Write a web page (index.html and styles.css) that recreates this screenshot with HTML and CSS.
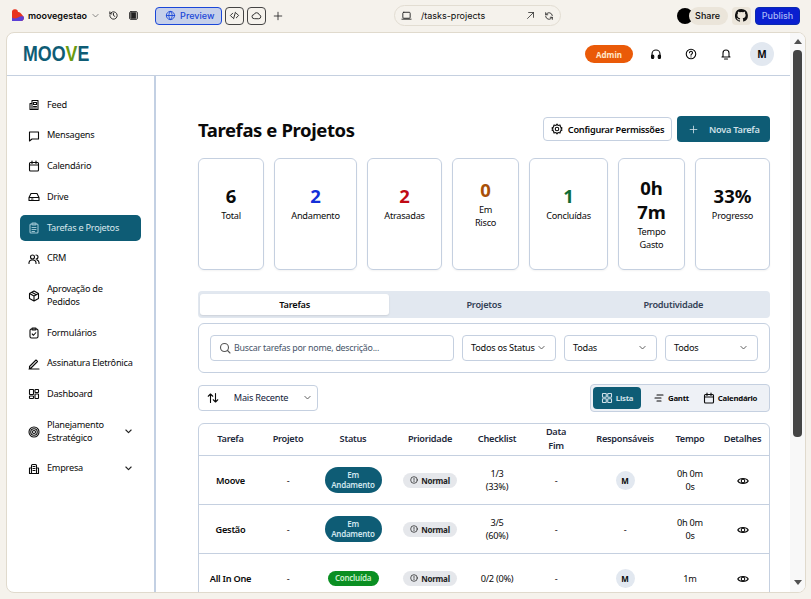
FILE: index.html
```html
<!DOCTYPE html>
<html lang="pt-BR">

<head>
    <meta charset="UTF-8">
    <title>Tarefas e Projetos</title>
    <link rel="stylesheet" href="styles.css">
</head>

<body>
    <!-- builder toolbar -->
    <header class="toolbar">
        <div class="tb-left">
            <svg class="tb-heart" viewBox="0 0 13 13" width="13" height="13"><path d="M1 12V3.500a3 3 0 0 1 6-.5 3 3 0 0 1 3 1.500l2.500 3a3 3 0 0 1-2.500 4.500z" fill="#e8321f"/><path d="M1 12V8.500c2 1.500 4 1 6 0s3.500-1.500 5.500-1a3 3 0 0 1-2.500 4.500z" fill="#5b3fd6"/></svg>
            <span class="tb-name">moovegestao</span>
            <svg class="tb-ic chev-sm" viewBox="0 0 24 24" width="9" height="9"><path d="M5 9l7 7 7-7"/></svg>
            <svg class="tb-ic tb-hist" viewBox="0 0 24 24" width="11" height="11"><path d="M4 12a8 8 0 1 0 2.500-5.800L4 8.500M4 4v4.500h4.500M12 7.500V12l3 2"/></svg>
            <svg class="tb-ic tb-panel" viewBox="0 0 24 24" width="11" height="11"><rect x="3.500" y="3.500" width="17" height="17" rx="3"/><rect x="7" y="6" width="10" height="12" fill="#222"/></svg>
            <button class="tb-preview">
                <svg class="tb-ic blue" viewBox="0 0 24 24" width="11" height="11"><circle cx="12" cy="12" r="9"/><path d="M3 12h18M12 3c-5 5-5 13 0 18M12 3c5 5 5 13 0 18"/></svg>
                Preview
            </button>
            <button class="tb-square"><svg class="tb-ic" viewBox="0 0 24 24" width="11" height="11"><path d="M8 7l-5 5 5 5M16 7l5 5-5 5M14 5l-4 14"/></svg></button>
            <button class="tb-square"><svg class="tb-ic" viewBox="0 0 24 24" width="11" height="11"><path d="M7 19a4.500 4.500 0 0 1-.5-9A6 6 0 0 1 18 10.500 4.300 4.300 0 0 1 17.500 19z"/></svg></button>
            <svg class="tb-ic tb-plus" viewBox="0 0 24 24" width="10" height="10"><path d="M12 3v18M3 12h18"/></svg>
        </div>
        <div class="tb-url">
            <svg class="tb-ic" viewBox="0 0 24 24" width="11" height="11"><rect x="4" y="5" width="16" height="13" rx="2"/><path d="M2 20h20"/></svg>
            <span class="tb-path">/tasks-projects</span>
            <svg class="tb-ic url-open" viewBox="0 0 24 24" width="9" height="9"><path d="M4 20L20 4M7 4h13v13"/></svg>
            <svg class="tb-ic" viewBox="0 0 24 24" width="10" height="10"><path d="M20 11a8 8 0 0 0-14-4L4 9M4 4v5h5M4 13a8 8 0 0 0 14 4l2-2M20 20v-5h-5"/></svg>
        </div>
        <div class="tb-right">
            <div class="tb-share">
                <span class="share-moon"></span>
                <span class="share-label">Share</span>
            </div>
            <div class="tb-github">
                <svg viewBox="0 0 16 16" width="13" height="13"><path fill="#111" d="M8 0a8 8 0 0 0-2.500 15.600c.4.100.5-.2.500-.4v-1.400c-2.200.5-2.700-1-2.700-1-.4-.9-.9-1.200-.9-1.200-.7-.5.100-.5.100-.5.800.100 1.200.8 1.200.8.700 1.200 1.900.9 2.300.7.100-.5.300-.9.500-1.100-1.800-.2-3.600-.9-3.600-4 0-.9.300-1.600.8-2.100-.1-.2-.4-1 .1-2.100 0 0 .7-.2 2.200.8a7.600 7.600 0 0 1 4 0c1.500-1 2.200-.8 2.200-.8.400 1.100.2 1.900.1 2.100.5.600.8 1.300.8 2.100 0 3.100-1.900 3.700-3.700 3.900.3.300.6.800.6 1.500v2.200c0 .2.100.5.600.4A8 8 0 0 0 8 0z"/></svg>
            </div>
            <button class="tb-publish">Publish</button>
        </div>
    </header>

    <div class="frame">
        <div class="app">
            <div class="app-head">
                <div class="logo">MO<span class="logo-o2">O</span><span class="logo-v">V</span>E</div>
                <div class="head-actions">
                    <span class="admin-pill">Admin</span>
                    <svg class="ic head-ic" viewBox="0 0 24 24" width="12" height="12"><path d="M4 18v-6a8 8 0 0 1 16 0v6"/><rect x="3" y="14" width="4.500" height="7" rx="2" fill="#111"/><rect x="16.500" y="14" width="4.500" height="7" rx="2" fill="#111"/></svg>
                    <svg class="ic head-ic" viewBox="0 0 24 24" width="12" height="12"><circle cx="12" cy="12" r="9.500"/><path d="M9 9.500a3 3 0 1 1 4.500 2.600c-1 .6-1.500 1.100-1.500 2.400M12 17.500v.5"/></svg>
                    <svg class="ic head-ic" viewBox="0 0 24 24" width="12" height="12"><path d="M6 17V10a6 6 0 0 1 12 0v7l2 1H4zM9 22h6"/></svg>
                    <span class="avatar avatar-lg">M</span>
                </div>
            </div>
            <div class="app-body">
                <nav class="sidebar">
                    <a class="nav-item"><svg class="ic" viewBox="0 0 24 24"><path d="M8 3h12v18H4V9h4zM8 3v18M11 7h6v4h-6zM11 15h6M11 18h6"/></svg><span>Feed</span></a>
                    <a class="nav-item"><svg class="ic" viewBox="0 0 24 24"><path d="M3 4h18v14H8l-5 4z"/></svg><span>Mensagens</span></a>
                    <a class="nav-item"><svg class="ic" viewBox="0 0 24 24"><rect x="3" y="5" width="18" height="17" rx="2"/><path d="M3 10h18M8 2v5M16 2v5"/></svg><span>Calendário</span></a>
                    <a class="nav-item"><svg class="ic" viewBox="0 0 24 24"><path d="M2 13l4-8h12l4 8v6H2zM2 13h20M7 16h3"/></svg><span>Drive</span></a>
                    <a class="nav-item active"><svg class="ic" viewBox="0 0 24 24"><rect x="4" y="4" width="16" height="18" rx="2"/><rect x="8" y="2" width="8" height="4" rx="1"/><path d="M8 11h8M8 15h8M8 19h5"/></svg><span>Tarefas e Projetos</span></a>
                    <a class="nav-item"><svg class="ic" viewBox="0 0 24 24"><circle cx="9" cy="8" r="4"/><path d="M2 21v-2a6 6 0 0 1 6-5h2a6 6 0 0 1 6 5v2M16 4a4 4 0 0 1 0 8M18 14a6 6 0 0 1 4 5v2"/></svg><span>CRM</span></a>
                    <a class="nav-item"><svg class="ic" viewBox="0 0 24 24"><path d="M12 2l9 5v10l-9 5-9-5V7zM3 7l9 5 9-5M12 12v10M7.500 4.500l9 5"/></svg><span>Aprovação de<br>Pedidos</span></a>
                    <a class="nav-item"><svg class="ic" viewBox="0 0 24 24"><rect x="4" y="4" width="16" height="18" rx="3"/><rect x="8" y="2" width="8" height="4" rx="1"/><path d="M8.500 14l2.500 2.500 4.500-5"/></svg><span>Formulários</span></a>
                    <a class="nav-item"><svg class="ic" viewBox="0 0 24 24"><path d="M3 17L16 4l3 3L6 20H3zM2 22h20"/></svg><span>Assinatura Eletrônica</span></a>
                    <a class="nav-item"><svg class="ic" viewBox="0 0 24 24"><rect x="3" y="3" width="8" height="10" rx="1"/><rect x="14" y="3" width="7" height="6" rx="1"/><rect x="14" y="12" width="7" height="9" rx="1"/><rect x="3" y="16" width="8" height="5" rx="1"/></svg><span>Dashboard</span></a>
                    <a class="nav-item"><svg class="ic" viewBox="0 0 24 24"><circle cx="12" cy="12" r="10"/><circle cx="12" cy="12" r="6.500"/><circle cx="12" cy="12" r="3"/></svg><span>Planejamento<br>Estratégico</span><svg class="nav-chev" viewBox="0 0 24 24"><path d="M5 8l7 7 7-7"/></svg></a>
                    <a class="nav-item"><svg class="ic" viewBox="0 0 24 24"><path d="M7 21V5a2 2 0 0 1 2-2h6a2 2 0 0 1 2 2v16M7 10H3v11h18V10h-4M10 7h4M10 11h4M10 15h4"/></svg><span>Empresa</span><svg class="nav-chev" viewBox="0 0 24 24"><path d="M5 8l7 7 7-7"/></svg></a>
                </nav>

                <main class="content">
                    <div class="page-head">
                        <h1>Tarefas e Projetos</h1>
                        <div class="page-actions">
                            <button class="btn-outline"><svg class="ic" viewBox="0 0 24 24"><circle cx="12" cy="12" r="3.500"/><path d="M12 2l2 3 4-1 1 4 3 2-2 2 2 2-3 2-1 4-4-1-2 3-2-3-4 1-1-4-3-2 2-2-2-2 3-2 1-4 4 1z"/></svg>Configurar Permissões</button>
                            <button class="btn-primary"><svg class="ic" viewBox="0 0 24 24"><path d="M12 3v18M3 12h18"/></svg>Nova Tarefa</button>
                        </div>
                    </div>

                    <section class="stats">
                        <div class="stat"><strong>6</strong><span>Total</span></div>
                        <div class="stat"><strong class="c-blue">2</strong><span>Andamento</span></div>
                        <div class="stat"><strong class="c-red">2</strong><span>Atrasadas</span></div>
                        <div class="stat"><strong class="c-amber">0</strong><span>Em<br>Risco</span></div>
                        <div class="stat"><strong class="c-green">1</strong><span>Concluídas</span></div>
                        <div class="stat stat-tall"><strong>0h<br>7m</strong><span>Tempo<br>Gasto</span></div>
                        <div class="stat"><strong>33%</strong><span>Progresso</span></div>
                    </section>

                    <div class="tabs">
                        <div class="tab active">Tarefas</div>
                        <div class="tab">Projetos</div>
                        <div class="tab">Produtividade</div>
                    </div>

                    <section class="filters">
                        <div class="field search"><svg class="ic search-ic" viewBox="0 0 24 24"><circle cx="11" cy="11" r="8"/><path d="M17 17l5 5"/></svg><span>Buscar tarefas por nome, descrição...</span></div>
                        <div class="field sel sel-status"><span>Todos os Status</span><svg class="chev" viewBox="0 0 24 24"><path d="M5 9l7 7 7-7"/></svg></div>
                        <div class="field sel sel-todas"><span>Todas</span><svg class="chev" viewBox="0 0 24 24"><path d="M5 9l7 7 7-7"/></svg></div>
                        <div class="field sel sel-todos"><span>Todos</span><svg class="chev" viewBox="0 0 24 24"><path d="M5 9l7 7 7-7"/></svg></div>
                    </section>

                    <div class="list-bar">
                        <div class="field sort"><svg class="ic" viewBox="0 0 24 24"><path d="M7 21V4M2.500 8.500L7 4l4.500 4.500M17 3v17M12.500 15.500L17 20l4.500-4.500"/></svg><span>Mais Recente</span><svg class="chev" viewBox="0 0 24 24"><path d="M5 9l7 7 7-7"/></svg></div>
                        <div class="views">
                            <button class="view active"><svg class="ic" viewBox="0 0 24 24"><rect x="3" y="3" width="7.500" height="7.500" rx="1"/><rect x="13.500" y="3" width="7.500" height="7.500" rx="1"/><rect x="3" y="13.500" width="7.500" height="7.500" rx="1"/><rect x="13.500" y="13.500" width="7.500" height="7.500" rx="1"/></svg>Lista</button>
                            <button class="view"><svg class="ic" viewBox="0 0 24 24"><path d="M8 6h12M4 12h12M8 18h8"/></svg>Gantt</button>
                            <button class="view"><svg class="ic" viewBox="0 0 24 24"><rect x="3" y="5" width="18" height="17" rx="2"/><path d="M3 10h18M8 2v5M16 2v5"/></svg>Calendário</button>
                        </div>
                    </div>

                    <div class="table-card">
                        <table class="tasks">
                            <colgroup>
                                <col class="w-tarefa"><col class="w-projeto"><col class="w-status"><col class="w-prio"><col class="w-check"><col class="w-data"><col class="w-resp"><col class="w-tempo"><col class="w-det">
                            </colgroup>
                            <thead>
                                <tr><th>Tarefa</th><th>Projeto</th><th>Status</th><th>Prioridade</th><th>Checklist</th><th>Data<br>Fim</th><th>Responsáveis</th><th>Tempo</th><th>Detalhes</th></tr>
                            </thead>
                            <tbody>
                                <tr>
                                    <td class="name">Moove</td><td>-</td>
                                    <td><span class="status">Em<br>Andamento</span></td>
                                    <td><span class="prio"><svg class="ic" viewBox="0 0 24 24"><circle cx="12" cy="12" r="10"/><path d="M12 7v6M12 16v1"/></svg>Normal</span></td>
                                    <td>1/3<br>(33%)</td><td>-</td>
                                    <td><span class="avatar">M</span></td>
                                    <td>0h 0m<br>0s</td>
                                    <td><svg class="ic eye" viewBox="0 0 24 24"><path d="M1.500 12C5 5.500 19 5.500 22.500 12 19 18.500 5 18.500 1.500 12z"/><circle cx="12" cy="12" r="3.500"/></svg></td>
                                </tr>
                                <tr>
                                    <td class="name">Gestão</td><td>-</td>
                                    <td><span class="status">Em<br>Andamento</span></td>
                                    <td><span class="prio"><svg class="ic" viewBox="0 0 24 24"><circle cx="12" cy="12" r="10"/><path d="M12 7v6M12 16v1"/></svg>Normal</span></td>
                                    <td>3/5<br>(60%)</td><td>-</td>
                                    <td>-</td>
                                    <td>0h 0m<br>0s</td>
                                    <td><svg class="ic eye" viewBox="0 0 24 24"><path d="M1.500 12C5 5.500 19 5.500 22.500 12 19 18.500 5 18.500 1.500 12z"/><circle cx="12" cy="12" r="3.500"/></svg></td>
                                </tr>
                                <tr>
                                    <td class="name">All In One</td><td>-</td>
                                    <td><span class="status done">Concluída</span></td>
                                    <td><span class="prio"><svg class="ic" viewBox="0 0 24 24"><circle cx="12" cy="12" r="10"/><path d="M12 7v6M12 16v1"/></svg>Normal</span></td>
                                    <td>0/2 (0%)</td><td>-</td>
                                    <td><span class="avatar">M</span></td>
                                    <td>1m</td>
                                    <td><svg class="ic eye" viewBox="0 0 24 24"><path d="M1.500 12C5 5.500 19 5.500 22.500 12 19 18.500 5 18.500 1.500 12z"/><circle cx="12" cy="12" r="3.500"/></svg></td>
                                </tr>
                            </tbody>
                        </table>
                    </div>
                </main>
            </div>
        </div>
        <div class="scrollbar">
            <span class="arrow-up"></span>
            <span class="thumb"></span>
            <span class="arrow-down"></span>
        </div>
    </div>
</body>

</html>
```

FILE: styles.css
```css
* {
    box-sizing: border-box;
}

html, body {
    height: 100%;
}

body {
    margin: 0;
    background-color: #f5f2ec;
    color: #0a0a0a;
    font-family: "Noto Sans", "Open Sans", sans-serif;
    font-size: 9.200px;
    letter-spacing: -0.250px;
    overflow: hidden;
    display: flex;
    flex-direction: column;
}

button {
    font-family: inherit;
    letter-spacing: inherit;
    cursor: pointer;
}

svg {
    flex: none;
}

/* toolbar */
.toolbar {
    height: 32px;
    flex: none;
    padding-bottom: 1px;
    display: flex;
    align-items: center;
    font-family: Inter, "Noto Sans", sans-serif;
    letter-spacing: 0;
}

.tb-ic {
    fill: none;
    stroke: #222;
    stroke-width: 2;
    stroke-linecap: round;
    stroke-linejoin: round;
}

.tb-ic.blue {
    stroke: #1a47d8;
}

.tb-left {
    display: flex;
    align-items: center;
    padding-left: 11px;
    width: 394px;
}

.tb-heart {
    margin-right: 4px;
}

.tb-name {
    font-size: 9px;
    font-weight: 600;
    margin-right: 4px;
}

.chev-sm {
    stroke: #666;
    margin-right: 8px;
}

.tb-hist {
    margin-right: 9px;
}

.tb-panel {
    margin-right: 16px;
}

.tb-preview {
    width: 67px;
    height: 18px;
    margin-right: 3px;
    display: flex;
    align-items: center;
    gap: 4px;
    padding: 0 0 0 9px;
    background-color: #c6d0ea;
    border: 1px solid #1a47d8;
    border-radius: 4px;
    color: #1a47d8;
    font-size: 9px;
    font-weight: 500;
}

.tb-square {
    width: 19px;
    height: 18px;
    margin-right: 3px;
    display: flex;
    align-items: center;
    justify-content: center;
    padding: 0;
    background: none;
    border: 1px solid #444;
    border-radius: 4px;
}

.tb-plus {
    margin-left: 4px;
}

.tb-url {
    width: 167px;
    height: 21px;
    display: flex;
    align-items: center;
    padding: 0 6px;
    border: 1px solid #e2ddd2;
    border-radius: 11px;
}

.tb-path {
    flex: 1;
    margin-left: 9px;
    font-size: 9px;
}

.url-open {
    margin-right: 9px;
}

.tb-right {
    margin-left: auto;
    padding-right: 11px;
    display: flex;
    align-items: center;
}

.tb-share {
    display: flex;
    align-items: center;
    height: 18px;
    margin-right: 4px;
}

.share-moon {
    width: 16px;
    height: 16px;
    margin-right: -4px;
    border-radius: 50%;
    background-color: #000;
}

.share-label {
    height: 18px;
    padding: 0 8px 0 6px;
    line-height: 18px;
    font-size: 9px;
    font-weight: 500;
    background-color: #ebe5da;
    border-radius: 9px;
    position: relative;
}

.tb-github {
    width: 19px;
    height: 18px;
    margin-right: 4px;
    display: flex;
    align-items: center;
    justify-content: center;
    background-color: #ebe5da;
    border-radius: 4px;
}

.tb-publish {
    width: 45px;
    height: 18px;
    padding: 0;
    color: #a9b8f5;
    background-color: #0a1fd0;
    border: 1px solid #0a2ab0;
    border-radius: 4px;
    font-size: 9px;
    font-weight: 500;
}

/* app frame */
.frame {
    height: 561px;
    flex: none;
    margin: 0 5px 0 6px;
    display: flex;
    background-color: #fff;
    border: 1px solid #e0dacd;
    border-radius: 8px;
    overflow: hidden;
}

.app {
    flex: 1;
    min-width: 0;
    overflow: hidden;
}

.scrollbar {
    width: 15px;
    flex: none;
    display: flex;
    flex-direction: column;
    align-items: center;
    background-color: #f8f8f8;
    padding-top: 6px;
}

.arrow-up, .arrow-down {
    width: 0;
    height: 0;
    border-left: 4.500px solid transparent;
    border-right: 4.500px solid transparent;
}

.arrow-up {
    border-bottom: 5px solid #505050;
}

.thumb {
    width: 9px;
    height: 387px;
    margin-top: 6px;
    border-radius: 4px;
    background-color: #444;
}

.arrow-down {
    margin-top: auto;
    margin-bottom: 7px;
    border-top: 5px solid #505050;
}

.app-head {
    height: 43px;
    display: flex;
    align-items: center;
    justify-content: space-between;
    padding: 0 16px;
    border-bottom: 1px solid #c5d0e0;
}

.logo {
    font-family: "Liberation Sans", sans-serif;
    font-size: 22px;
    font-weight: 700;
    letter-spacing: 0;
    color: #0e5c75;
    transform: scaleX(0.81);
    transform-origin: left center;
}

.logo-v {
    color: #6a9a10;
}

.head-actions {
    display: flex;
    align-items: center;
}

.admin-pill {
    width: 48px;
    height: 18px;
    margin-right: 17px;
    display: flex;
    align-items: center;
    justify-content: center;
    font-size: 8px;
    font-weight: 700;
    letter-spacing: 0;
    color: #ffe7c8;
    background-color: #ea5a08;
    border-radius: 9px;
}

.ic {
    width: 12px;
    height: 12px;
    fill: none;
    stroke: currentColor;
    stroke-width: 2.200;
    stroke-linecap: round;
    stroke-linejoin: round;
}

.head-ic {
    margin-right: 23px;
}

.head-ic:nth-of-type(3) {
    margin-right: 18px;
}

.avatar {
    width: 19px;
    height: 19px;
    display: inline-flex;
    align-items: center;
    justify-content: center;
    font-size: 8px;
    font-weight: 700;
    letter-spacing: 0;
    background-color: #e2e8f0;
    border-radius: 50%;
}

.avatar-lg {
    width: 24px;
    height: 24px;
    font-size: 10px;
}

.app-body {
    display: flex;
}

/* sidebar */
.sidebar {
    width: 149px;
    height: 520px;
    flex: none;
    display: flex;
    flex-direction: column;
    gap: 4px;
    padding: 15.500px 13px 0;
    border-right: 2px solid #c3d0e3;
}

.nav-item {
    display: flex;
    align-items: center;
    gap: 7px;
    padding: 7px 8px;
    line-height: 12.750px;
    border-radius: 5px;
    color: #0a0a0a;
}

.nav-item span {
    flex: 1;
}

.nav-item.active {
    background-color: #0e5c75;
    color: #dbe8ee;
}

.nav-item.active .ic {
    stroke: #9cc4d2;
}

.nav-chev {
    width: 9px;
    height: 9px;
    fill: none;
    stroke: #222;
    stroke-width: 3;
    stroke-linecap: round;
    stroke-linejoin: round;
}

/* main content */
.content {
    flex: 1;
    min-width: 0;
    padding: 40px 20px 0 42px;
}

.page-head {
    display: flex;
    align-items: center;
    justify-content: space-between;
    height: 26px;
}

h1 {
    margin: 0;
    font-size: 18.500px;
    font-weight: 700;
    letter-spacing: -0.400px;
}

.page-actions {
    display: flex;
    align-items: center;
    gap: 5px;
}

.btn-outline {
    width: 129px;
    height: 24px;
    display: flex;
    align-items: center;
    justify-content: center;
    gap: 5px;
    padding: 0;
    font-size: 9.200px;
    font-weight: 600;
    color: #0a0a0a;
    background-color: #fff;
    border: 1px solid #c5d0e0;
    border-radius: 4px;
}

.btn-primary {
    width: 93px;
    height: 26px;
    display: flex;
    align-items: center;
    gap: 11px;
    padding: 0 0 0 12px;
    font-size: 9.200px;
    font-weight: 600;
    white-space: nowrap;
    color: #cfe0e8;
    background-color: #0e5c75;
    border: none;
    border-radius: 4px;
}

.btn-primary .ic {
    width: 9px;
    height: 9px;
}

.stats {
    margin-top: 16px;
    height: 112px;
    display: grid;
    grid-template-columns: 66px 83px 75px 67px 79px 67px 75px;
    gap: 10px;
}

.stat {
    display: flex;
    flex-direction: column;
    align-items: center;
    justify-content: center;
    padding: 0 6px 22px;
    text-align: center;
    border: 1px solid #c5d0e0;
    border-radius: 6px;
    box-shadow: 0 1px 2px rgba(0, 0, 0, 0.05);
}

.stat-tall {
    padding-bottom: 2px;
}

.stat strong {
    font-size: 18.500px;
    line-height: 24px;
    font-weight: 700;
    letter-spacing: 0;
}

.stat span {
    margin-top: 1px;
    line-height: 13px;
}

.c-blue {
    color: #1430d8;
}

.c-red {
    color: #c00a14;
}

.c-amber {
    color: #a84f08;
}

.c-green {
    color: #0f6b35;
}

.tabs {
    margin-top: 21px;
    height: 27px;
    padding: 3px 2px;
    display: flex;
    background-color: #e2e8f0;
    border-radius: 4px;
}

.tab {
    flex: 1;
    display: flex;
    align-items: center;
    justify-content: center;
    font-weight: 600;
    color: #334155;
    border-radius: 3px;
}

.tab.active {
    color: #0a0a0a;
    background-color: #fff;
    box-shadow: 0 1px 2px rgba(0, 0, 0, 0.1);
}

.filters {
    margin-top: 5px;
    height: 50px;
    padding: 11px;
    display: flex;
    gap: 8px;
    border: 1px solid #c5d0e0;
    border-radius: 6px;
}

.field {
    height: 26px;
    display: flex;
    align-items: center;
    padding-bottom: 1px;
    background-color: #fff;
    border: 1px solid #c5d0e0;
    border-radius: 4px;
}

.search {
    flex: 1;
    padding-left: 8px;
    gap: 3px;
    color: #475569;
    font-size: 8.900px;
}

.search-ic {
    color: #555;
}

.sel {
    justify-content: space-between;
    padding-left: 8px;
    padding-right: 9px;
}

.sel-status {
    width: 94px;
    padding-right: 9px;
}

.sel-todas {
    width: 93px;
}

.sel-todos {
    width: 93px;
}

.chev {
    width: 9px;
    height: 9px;
    fill: none;
    stroke: #555;
    stroke-width: 2.500;
    stroke-linecap: round;
    stroke-linejoin: round;
}

.list-bar {
    margin-top: 11px;
    height: 28px;
    display: flex;
    align-items: center;
    justify-content: space-between;
}

.sort {
    width: 120px;
    justify-content: space-between;
    padding-left: 8px;
    padding-right: 5px;
}

.sort span {
    color: #12213a;
}

.views {
    width: 180px;
    height: 28px;
    padding: 2px;
    display: flex;
    align-items: center;
    background-color: #eef1f6;
    border: 1px solid #c5d0e0;
    border-radius: 4px;
}

.view {
    height: 22px;
    display: flex;
    align-items: center;
    justify-content: center;
    gap: 3px;
    padding: 0 4px;
    font-size: 7.800px;
    font-weight: 700;
    color: #0a0a0a;
    background: none;
    border: none;
    border-radius: 4px;
}

.view:nth-child(1) {
    width: 48px;
    margin-right: 6px;
}

.view:nth-child(2) {
    width: 48px;
}

.view:nth-child(3) {
    width: 70px;
}

.view.active {
    color: #cfe0e8;
    background-color: #0e5c75;
}

/* table */
.table-card {
    margin-top: 11px;
    border: 1px solid #c5d0e0;
    border-radius: 6px;
    overflow: hidden;
}

.tasks {
    width: 570px;
    table-layout: fixed;
    border-collapse: collapse;
    text-align: center;
}

.w-tarefa { width: 63px; }
.w-projeto { width: 52px; }
.w-status { width: 78px; }
.w-prio { width: 76px; }
.w-check { width: 58px; }
.w-data { width: 60px; }
.w-resp { width: 78px; }
.w-tempo { width: 52px; }
.w-det { width: 53px; }

.tasks th {
    height: 31px;
    padding: 0 1px;
    line-height: 14px;
    font-weight: 600;
    color: #1e293b;
    border-bottom: 1px solid #c5d0e0;
}

.tasks td {
    height: 49px;
    padding: 1px 3px 0;
    line-height: 13px;
    border-bottom: 1px solid #c5d0e0;
}

.tasks td.name {
    padding: 1px 0 0;
    font-weight: 600;
}

.status {
    display: inline-block;
    width: 57px;
    padding: 3px 0;
    font-size: 8px;
    line-height: 10px;
    font-weight: 600;
    color: #cfe6ee;
    background-color: #0e5c75;
    border-radius: 13px;
    vertical-align: middle;
}

.status.done {
    width: 51px;
    padding: 2px 0 3px;
    color: #c8f0cc;
    background-color: #0a8f22;
}

.prio {
    display: inline-flex;
    align-items: center;
    gap: 3px;
    height: 15px;
    padding: 0 7px;
    font-size: 8px;
    font-weight: 700;
    color: #222;
    background-color: #e5e7eb;
    border-radius: 8px;
    vertical-align: middle;
}

.prio .ic {
    width: 8px;
    height: 8px;
}

.eye {
    vertical-align: middle;
}
```
